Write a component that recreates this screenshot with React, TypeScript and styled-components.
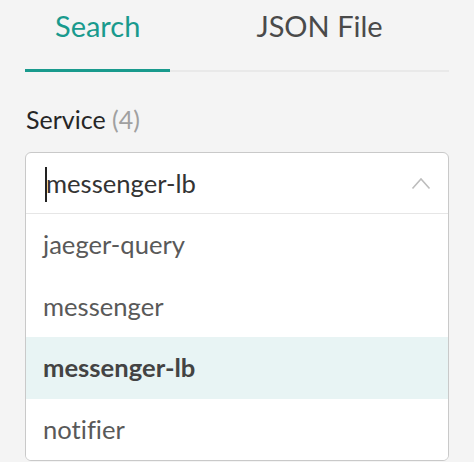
import * as React from 'react'
import styled, { createGlobalStyle } from 'styled-components'

// ______________________________________________________
//
// @ Data

const services = ['jaeger-query', 'messenger', 'messenger-lb', 'notifier']
const selected = 'messenger-lb'

// ______________________________________________________
//
// @ Styles

const GlobalStyle = createGlobalStyle`
  html, body {
    margin: 0;
    padding: 0;
    background: #f4f4f4;
  }
  body {
    font-family: Lato, "Liberation Sans", sans-serif;
    font-variant-ligatures: none;
    -webkit-font-smoothing: antialiased;
  }
`

const Page = styled.div`
  display: flex;
  flex-direction: column;
  padding: 0 25px;
  height: 462px;
  overflow: hidden;
`

const TabBar = styled.div`
  display: flex;
  gap: 56px;
  border-bottom: 2px solid #e9e9e9;
`

const Tab = styled.div<{ $active?: boolean }>`
  position: relative;
  padding: 3px 30px 21px;
  font-size: 29px;
  line-height: 46px;
  color: ${p => (p.$active ? '#199a8d' : '#4a4a4a')};
  &::after {
    content: '';
    display: ${p => (p.$active ? 'block' : 'none')};
    position: absolute;
    left: 0;
    right: 0;
    bottom: -2px;
    height: 3px;
    background: #199a8d;
  }
`

const Label = styled.div`
  margin: 27px 0 13px 1px;
  font-size: 25px;
  line-height: 40px;
  color: #262626;
  > .count {
    color: #a0a0a0;
  }
`

const SelectBox = styled.div`
  background: #fff;
  border: 1px solid #c9c9c9;
  border-radius: 6px;
  overflow: hidden;
`

const Input = styled.div`
  display: flex;
  align-items: center;
  justify-content: space-between;
  height: 60px;
  padding: 0 17px 0 19px;
  border-bottom: 1px solid #e6e6e6;
  font-size: 25.6px;
  line-height: 60px;
  color: #333;
`

const Caret = styled.span`
  display: inline-block;
  width: 2px;
  height: 35px;
  margin-right: -1px;
  background: #222;
  vertical-align: -9px;
`

const Option = styled.div<{ $selected?: boolean }>`
  height: 61.5px;
  padding: 0 17px;
  font-size: 25.6px;
  line-height: 61.5px;
  font-weight: ${p => (p.$selected ? 700 : 400)};
  color: ${p => (p.$selected ? '#434343' : '#595959')};
  background: ${p => (p.$selected ? '#e8f4f4' : '#fff')};
`

// ______________________________________________________
//
// @ View

const ChevronUp = () => (
  <svg width="20" height="14" viewBox="0 0 20 14" fill="none">
    <polyline points="1.5,12.5 10,3 18.5,12.5" stroke="#bdbdbd" strokeWidth="1.6" />
  </svg>
)

export default function App() {
  return (
    <>
      <GlobalStyle />
      <Page>
        <TabBar>
          <Tab $active>Search</Tab>
          <Tab>JSON File</Tab>
        </TabBar>
        <Label>
          Service <span className="count">(4)</span>
        </Label>
        <SelectBox>
          <Input>
            <span>
              <Caret />
              {selected}
            </span>
            <ChevronUp />
          </Input>
          {services.map(s => (
            <Option key={s} $selected={s === selected}>
              {s}
            </Option>
          ))}
        </SelectBox>
      </Page>
    </>
  )
}
